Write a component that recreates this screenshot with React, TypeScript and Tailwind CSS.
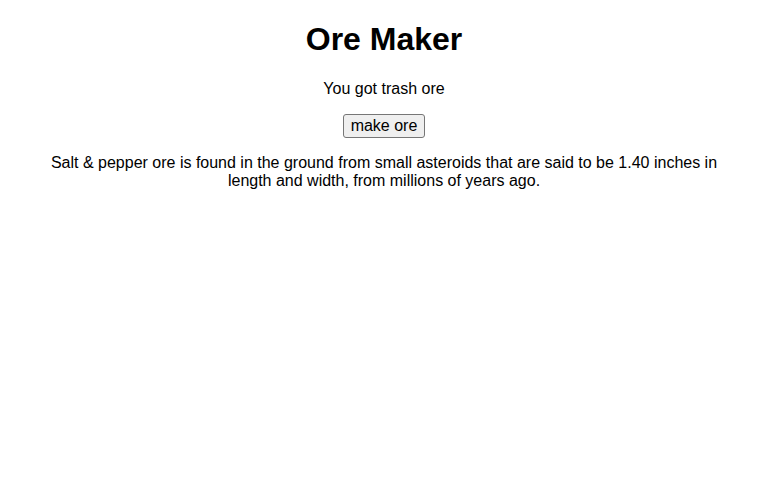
export default function App() {
  return (
    <div className="px-2 text-center font-['Liberation_Sans',Arial,sans-serif] leading-[normal] text-black">
      <h1 className="my-[21.44px] text-[32px] font-bold leading-[normal]">Ore Maker</h1>
      <p className="my-4 text-base leading-[normal]">You got trash ore</p>
      <button
        type="button"
        className="rounded-[3px] border border-[#767676] bg-[#efefef] px-[7px] py-[2px] text-base leading-[normal] text-black"
      >
        make ore
      </button>
      <p className="mx-auto my-4 max-w-[690px] text-base leading-[normal]">
        Salt &amp; pepper ore is found in the ground from small asteroids that are said to be 1.40 inches in length and
        width, from millions of years ago.
      </p>
    </div>
  );
}
